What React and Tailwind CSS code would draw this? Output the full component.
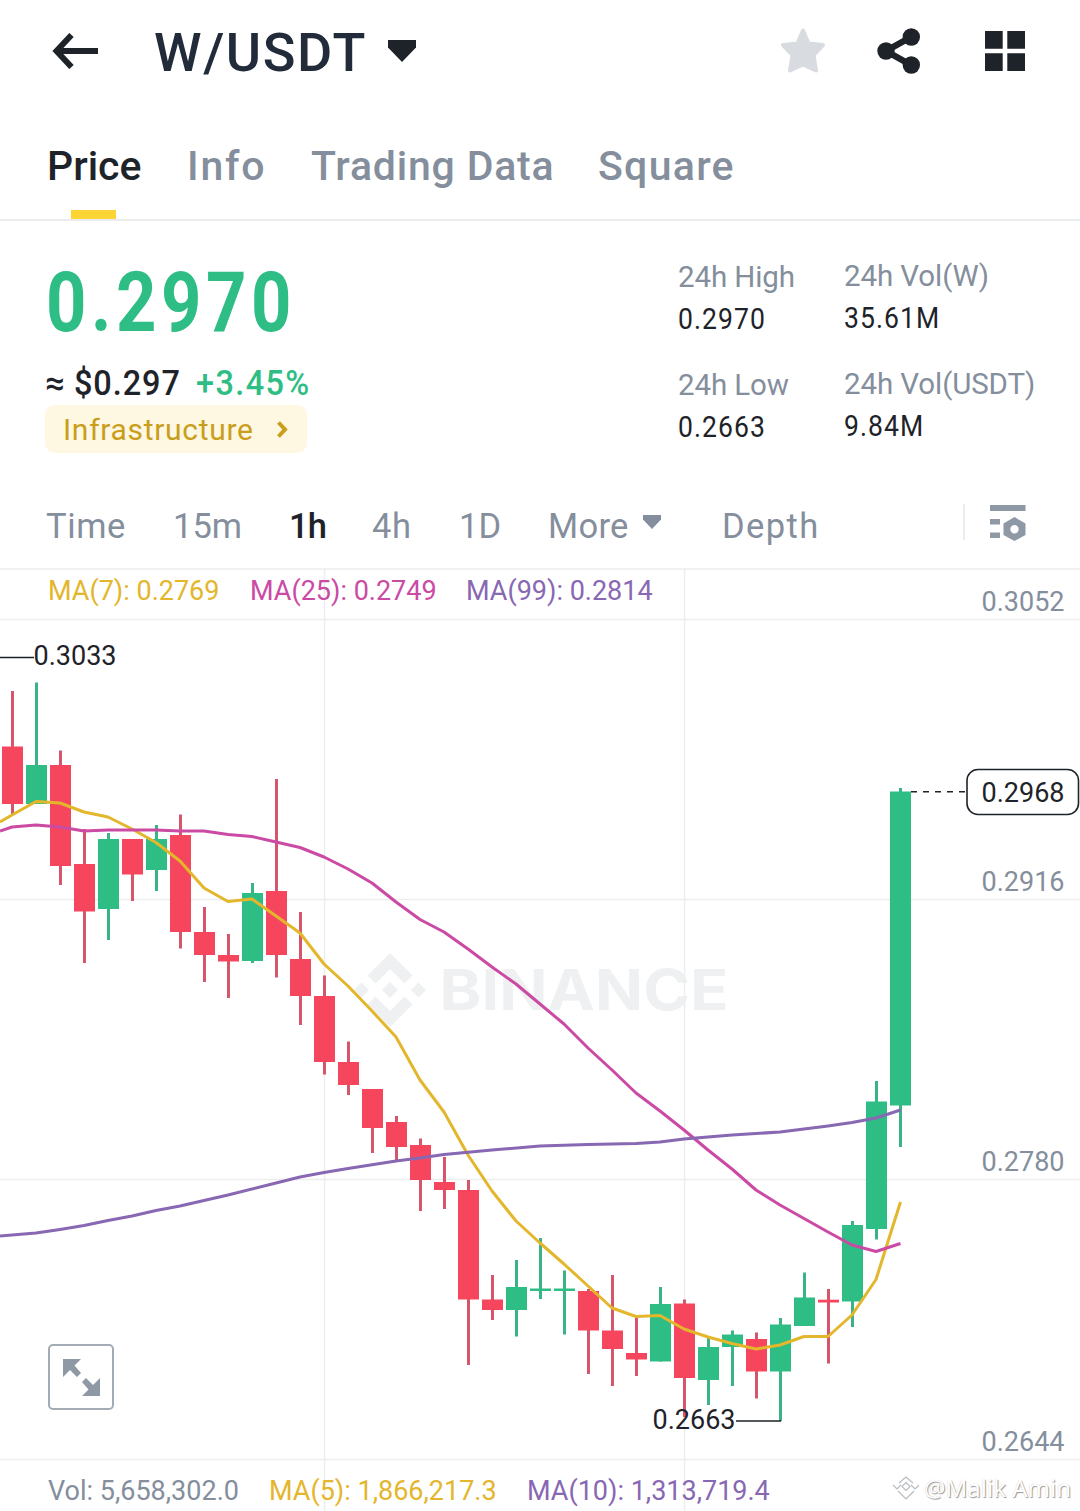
import { clsx } from "clsx";

const UP = "#2ebd85";
const DOWN = "#f6465d";

// [wick top, body top, body bottom, wick bottom, direction]
const CANDLES = [
  [691, 746.5, 804, 815, "down"],
  [682.5, 765, 804, 804, "up"],
  [750.5, 765, 866, 885, "down"],
  [829, 864, 911.5, 963, "down"],
  [833, 839, 909, 940, "up"],
  [839, 839, 874.5, 901, "down"],
  [825, 839, 870, 891, "up"],
  [814.5, 835, 932, 948.5, "down"],
  [907, 932, 955, 982, "down"],
  [934, 955, 961.5, 998, "down"],
  [883, 893, 961, 963, "up"],
  [779, 891, 955, 977.5, "down"],
  [912, 959, 996, 1025, "down"],
  [975.5, 996, 1062, 1074.5, "down"],
  [1041.5, 1062, 1085, 1095, "down"],
  [1089, 1089, 1128, 1153, "down"],
  [1116, 1122, 1147, 1160, "down"],
  [1138.5, 1145, 1180, 1211, "down"],
  [1157, 1182, 1190, 1209, "down"],
  [1180, 1190, 1299.5, 1365, "down"],
  [1275, 1299.5, 1310, 1320, "down"],
  [1260, 1287, 1310, 1336.5, "up"],
  [1238, 1288.5, 1291, 1299, "up"],
  [1270.5, 1288.5, 1291, 1334.5, "up"],
  [1289, 1291, 1330.5, 1374, "down"],
  [1275, 1330.5, 1349, 1386, "down"],
  [1317, 1353, 1359.5, 1376, "down"],
  [1287, 1304, 1361.5, 1361.5, "up"],
  [1299.5, 1303.5, 1378, 1417, "down"],
  [1337, 1347, 1380, 1405, "up"],
  [1330.5, 1334.5, 1347, 1386, "up"],
  [1332.5, 1339, 1371.5, 1398.5, "down"],
  [1318, 1324.5, 1371.5, 1421, "up"],
  [1272.5, 1297.5, 1326, 1326, "up"],
  [1289, 1299.7, 1302.5, 1363.5, "down"],
  [1221, 1225, 1301.5, 1327, "up"],
  [1081, 1101.5, 1229, 1239.5, "up"],
  [788, 791.5, 1105.5, 1147, "up"],
];

const MA7 =
  "0,822 12,815 36,801.5 60,803 84,812 108,817 132,829 156,842.5 180,861 204,888 228,901.5 252,899 276,916 300,933 324,964 348,986 372,1011 396,1037 420,1080 444,1112 468,1155 492,1191 516,1221 540,1243 564,1264 588,1286 612,1308 636,1316.5 660,1315.5 684,1329 708,1337 732,1343.5 756,1349 780,1345 804,1336.5 828,1336.5 852,1315 876,1279.5 900.5,1202";
const MA25 =
  "0,831 12,827 36,825 60,827 84,831 108,830 156,830 180,831 204,831 228,834.5 252,836.5 276,842 300,847.5 324,857 348,869 372,883 396,902 420,919.5 444,932 468,949 492,967 516,984 540,1004 564,1024 588,1048 612,1070 636,1093 660,1111 684,1130 708,1150 732,1169 756,1190 780,1205 804,1218.5 828,1232 852,1245 876,1251.5 900.5,1243.5";
const MA99 =
  "0,1236 36,1233 60,1229.5 84,1225.5 108,1220.5 132,1216 156,1210.5 180,1206 228,1195 276,1183 300,1177 324,1172.5 348,1168.5 396,1161 420,1158 444,1154.5 492,1150 540,1146 588,1144.5 636,1143.5 660,1142 684,1139 708,1137 732,1135 780,1132 804,1129 828,1126 852,1122.5 876,1118 900.5,1110";

const AXIS = [
  { y: 619, label: "0.3052" },
  { y: 899, label: "0.2916" },
  { y: 1179, label: "0.2780" },
  { y: 1459, label: "0.2644" },
];

function Header() {
  return (
    <header className="flex h-[102px] items-center text-[#1e2329]">
      <svg className="ml-[52px] h-[36px] w-[46px]" viewBox="0 0 46 36" fill="none" stroke="#1e2329" strokeWidth="6">
        <path d="M46 18H5M19.500 2 4.500 18l15 16" />
      </svg>
      <h1 className="ml-[56px] w-[234px] pt-1 text-[54px] font-medium leading-none tracking-[1.6px] text-[#222b3a]">
        W/USDT
      </h1>
      <svg className="h-[22px] w-[28px]" viewBox="0 0 28 22" fill="#1e2329">
        <path d="M0 0h28v7.500L14 22 0 7.500z" />
      </svg>
      <svg className="ml-[365px] h-[46px] w-[44px]" viewBox="0 0 44 46" fill="#d8dbe0" stroke="#d8dbe0" strokeWidth="4" strokeLinejoin="round">
        <path d="M22 2.500 27.500 15.500 42 17 32.500 27 35 42.500 22 36.500 9 42.500 11.500 27 2 17 16.500 15.500z" />
      </svg>
      <svg className="ml-[52px] h-[46px] w-[43px]" viewBox="0 0 43 46" fill="#1e2329">
        <path d="M34 9 9 23l25 14" fill="none" stroke="#1e2329" strokeWidth="6.500" />
        <circle cx="34.300" cy="9" r="8.700" />
        <circle cx="9" cy="23" r="8.700" />
        <circle cx="34.300" cy="37" r="8.700" />
      </svg>
      <svg className="ml-[65px] h-[40px] w-[40px]" viewBox="0 0 40 40" fill="#1e2329">
        <path d="M0 0h17.700v17.700H0zM22.300 0H40v17.700H22.300zM0 22.300h17.700V40H0zM22.300 22.300H40V40H22.300z" />
      </svg>
    </header>
  );
}

const TABS = [
  { label: "Price", className: "w-[140px] text-[#1e2329]" },
  { label: "Info", className: "w-[124px] tracking-[1.8px]" },
  { label: "Trading Data", className: "w-[287px] tracking-[0.8px]" },
  { label: "Square", className: "tracking-[1.3px]" },
];

function Tabs() {
  return (
    <nav className="relative flex h-[119px] items-start border-b-2 border-[#eaebed] pl-[47px] pt-[44px] text-[41px] font-medium leading-[41px] text-[#848e9c]">
      {TABS.map((tab) => (
        <div key={tab.label} className={clsx("whitespace-nowrap", tab.className)}>
          {tab.label}
        </div>
      ))}
      <span className="absolute bottom-0 left-[71px] h-[9px] w-[45px] bg-[#fcd535]" />
    </nav>
  );
}

function Stat({ label, value }) {
  return (
    <div className="whitespace-nowrap leading-[42px]">
      <div className="text-[29.500px] tracking-[-0.1px] text-[#848e9c]">{label}</div>
      <div className="origin-left scale-x-90 text-[29.500px] tracking-[1.2px] text-[#1e2329]">{value}</div>
    </div>
  );
}

function Summary() {
  return (
    <section className="flex h-[263px] pl-[45px]">
      <div className="w-[633px] pt-[40px]">
        <div className="ml-[1px] origin-left scale-x-[0.85] text-[83px] font-bold leading-[84px] tracking-[5.3px] text-[#2ebd85]">
          0.2970
        </div>
        <div className="mt-[18px] flex h-[40px] items-center text-[34.500px] font-medium leading-none">
          <span className="w-[29px] text-[34.500px] text-[#1e2329]">≈</span>
          <span className="w-[122px] origin-left scale-x-[0.94] tracking-[1px] text-[#1e2329]">$0.297</span>
          <span className="origin-left scale-x-[0.94] tracking-[1.500px] text-[#2ebd85]">+3.45%</span>
        </div>
        <div className="mt-[2px] flex h-[48px] w-[262px] items-center rounded-[10px] bg-[#fef7e2] pl-[18px] text-[30px] leading-none tracking-[0.7px] text-[#c99e1b]">
          <span className="w-[214px] pt-[2px]">Infrastructure</span>
          <svg className="h-[17px] w-[11px]" viewBox="0 0 11 17" fill="none" stroke="#c99e1b" strokeWidth="4">
            <path d="M1.500 1.500 8 8.500l-6.500 7" />
          </svg>
        </div>
      </div>
      <div className="flex w-[166px] flex-col gap-[24px] pt-[35px]">
        <Stat label="24h High" value="0.2970" />
        <Stat label="24h Low" value="0.2663" />
      </div>
      <div className="flex flex-col gap-[24px] pt-[34px]">
        <Stat label="24h Vol(W)" value="35.61M" />
        <Stat label="24h Vol(USDT)" value="9.84M" />
      </div>
    </section>
  );
}

const INTERVALS = [
  { label: "Time", className: "w-[127px] tracking-[0.6px]" },
  { label: "15m", className: "w-[116px]" },
  { label: "1h", className: "w-[83px] font-medium tracking-[-0.8px] text-[#1e2329]" },
  { label: "4h", className: "w-[87px] tracking-[0.5px]" },
  { label: "1D", className: "w-[89px]" },
  { label: "More", className: "w-[95px] tracking-[0.3px]" },
];

function Intervals() {
  return (
    <div className="flex h-[84px] items-center pl-[46px] text-[34.500px] leading-none text-[#848e9c]">
      {INTERVALS.map((item) => (
        <div key={item.label} className={item.className}>
          {item.label}
        </div>
      ))}
      <svg className="-mt-2 h-[14px] w-[18px]" viewBox="0 0 18 14" fill="#848e9c">
        <path d="M0 0h18v4.500L9 14 0 4.500z" />
      </svg>
      <div className="ml-[61px] w-[241px] tracking-[1.4px]">Depth</div>
      <div className="-mt-2 h-[36px] w-[2px] bg-[#eaebed]" />
      <svg className="-mt-1.5 ml-[25px] h-[36px] w-[36px]" viewBox="0 0 36 36" fill="#8f98a5">
        <path d="M0 0h35.500v6H0zM0 14h10v5.500H0zM0 27.500h10V33H0z" />
        <path fillRule="evenodd" d="M24.500 12 35.500 18.500v11.500L24.500 36 13.500 30V18.500zM24.500 20a4.200 4.200 0 1 0 0 8.400 4.200 4.200 0 0 0 0-8.400z" />
      </svg>
    </div>
  );
}

function Watermark() {
  return (
    <g fill="#eef0f1">
      <path d="M390 953l22.500 22.500-8 8L390 969l-14.500 14.500-8-8zM390 982l8 8-8 8-8-8zM361.500 982.500l7.500 7.500-7.500 7.500-7.500-7.500zM418.500 982.500l7.500 7.500-7.500 7.500-7.500-7.500zM375.500 996.500 390 1011l14.500-14.500 8 8L390 1027l-22.500-22.500z" />
      <text
        x="439.500"
        y="1010"
        textLength="289"
        lengthAdjust="spacingAndGlyphs"
        fontSize="56"
        fontWeight="700"
        fontFamily="Inter, sans-serif"
      >
        BINANCE
      </text>
    </g>
  );
}

function Chart() {
  return (
    <svg className="absolute inset-0 h-full w-full" viewBox="0 568 1080 943" fontSize="27" fontFamily="Roboto, sans-serif">
      <Watermark />
      <g stroke="#ededee" strokeWidth="1.500">
        <path d="M0 569H1080M324.500 568V1511M684.500 568V1511" />
        {AXIS.map((row) => (
          <path key={row.label} d={`M0 ${row.y + 0.5}H1080`} />
        ))}
      </g>
      {CANDLES.map(([high, top, bottom, low, dir], i) => (
        <g key={i} fill={dir === "up" ? UP : DOWN}>
          <rect x={11 + i * 24} y={high} width="3" height={low - high} fill={dir === "up" ? "#3bb384" : "#d4566a"} />
          <rect x={2 + i * 24} y={top} width="21" height={bottom - top} />
        </g>
      ))}
      <g fill="none" strokeWidth="3" strokeLinejoin="round">
        <polyline points={MA7} stroke="#e3b62c" />
        <polyline points={MA25} stroke="#cb4aa4" />
        <polyline points={MA99} stroke="#8867b3" />
      </g>
      <g fill="#848e9c">
        {AXIS.map((row) => (
          <text key={row.label} x="981.500" y={row.y - 8.5}>
            {row.label}
          </text>
        ))}
      </g>
      <g stroke="#1e2329" strokeWidth="1.600">
        <path d="M0 657.500H34M736 1421H781" />
        <path d="M911 791.800H966" strokeDasharray="6 6" />
        <rect x="967" y="769.500" width="111.500" height="45" rx="11" fill="#fff" />
      </g>
      <g fill="#1e2329">
        <text x="33.500" y="664.500">0.3033</text>
        <text x="652.500" y="1429">0.2663</text>
        <text x="981.500" y="802">0.2968</text>
      </g>
    </svg>
  );
}

function Credit() {
  return (
    <div className="absolute bottom-[11px] left-[892px] flex items-center gap-[4px]">
      <svg className="h-[24px] w-[28px]" viewBox="0 0 28 24" fill="none" stroke="#b9bcbf" strokeWidth="1.200">
        <path d="M7 7l7-6 7 6M14 6.500l4 4-4 4-4-4zM1 9l4 4 4-4M19 9l4 4 4-4M6 15l8 8 8-8" />
      </svg>
      <span className="whitespace-nowrap font-['Noto_Sans',sans-serif] text-[24px] leading-none text-white [text-shadow:1px_1px_1px_#999,0_0_1px_#ccc]">
        @Malik Amin
      </span>
    </div>
  );
}

export default function App() {
  return (
    <div className="flex h-[1511px] w-[1080px] flex-col overflow-hidden bg-white font-[Roboto,sans-serif]">
      <Header />
      <Tabs />
      <Summary />
      <Intervals />
      <main className="relative flex flex-1 flex-col justify-between text-[27px] leading-none">
        <Chart />
        <div className="relative flex pl-[48px] pt-[10px]">
          <span className="w-[202px] text-[#e3b62c]">MA(7): 0.2769</span>
          <span className="w-[216px] text-[#cb4aa4]">MA(25): 0.2749</span>
          <span className="text-[#8867b3]">MA(99): 0.2814</span>
        </div>
        <button
          aria-label="Full screen"
          className="absolute left-[48px] top-[776px] flex h-[66px] w-[66px] items-center justify-center rounded-[5px] border-2 border-[#a3abb5] bg-white"
        >
          <svg className="h-[37px] w-[37px]" viewBox="0 0 37 37" fill="#8f98a5">
            <path d="M0 0h18l-6.500 6.500 6.500 7.500-4 4-7-7-7 7zM37 37H19l6.500-6.500L19 23l4-4 7 7 7-7z" />
          </svg>
        </button>
        <div className="relative flex pb-[6px] pl-[48px]">
          <span className="w-[221px] text-[#848e9c]">Vol: 5,658,302.0</span>
          <span className="w-[258px] text-[#e3b62c]">MA(5): 1,866,217.3</span>
          <span className="text-[#8867b3]">MA(10): 1,313,719.4</span>
        </div>
        <Credit />
      </main>
    </div>
  );
}
